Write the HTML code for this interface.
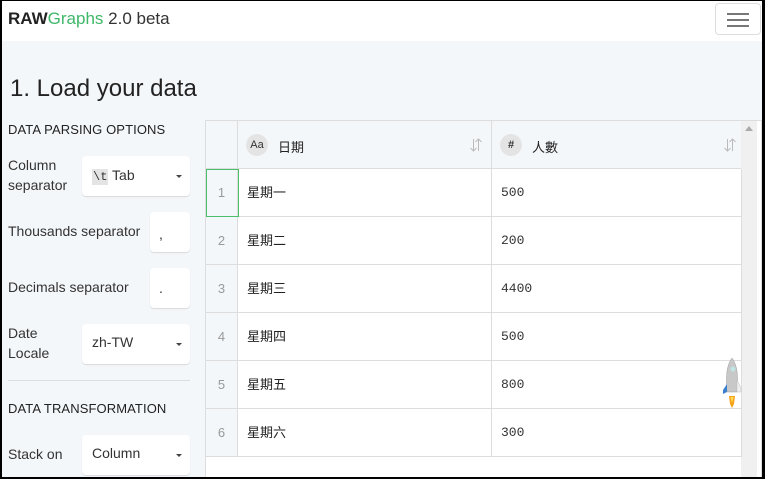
<!DOCTYPE html>
<html><head><meta charset="utf-8"><style>
*{box-sizing:border-box;margin:0;padding:0}
body{width:765px;height:479px;overflow:hidden;background:#000;font-family:"Liberation Sans","Noto Sans CJK TC",sans-serif;color:#222}
#f{position:absolute;left:2px;top:1px;width:760px;height:476px;background:#f4f7fa;overflow:hidden}
.a{position:absolute}
.hdr{left:0;top:0;width:760px;height:40px;background:#fff}
.sel{position:absolute;background:#fff;border-radius:4px;box-shadow:0 1px 1px rgba(0,0,0,.12);font-size:14px;color:#333}
.car{position:absolute;right:8px;top:50%;margin-top:-1px;border-left:3px solid transparent;border-right:3px solid transparent;border-top:3px solid #444}
.lbl{position:absolute;left:6px;font-size:14px;line-height:20px;color:#333}
.h6{position:absolute;left:6px;font-size:13px;letter-spacing:.1px;color:#222}
.cell{position:absolute;border-right:1px solid #ddd;border-bottom:1px solid #ddd;font-size:13px}
.num{color:#999;text-align:center;font-size:13px}
.mono{font-family:"Liberation Mono",monospace;font-size:13px;color:#333}
.pill{position:absolute;left:8px;top:13px;width:22px;height:22px;border-radius:11px;background:#e4e4e4;font-size:11px;text-align:center;line-height:22px;color:#333}
.srt{position:absolute;top:17px}
</style></head><body><div id="f">
<div class="a hdr"></div>
<div class="a" style="left:6px;top:8px;font-size:17px"><b style="color:#222">RAW</b><span style="color:#3fb768">Graphs</span> <span style="color:#333">2.0 beta</span></div>
<div class="a" style="left:713px;top:2px;width:46px;height:32px;border:1px solid #ddd;border-radius:4px;background:#fff">
<div class="a" style="left:11px;top:9px;width:22px;height:2px;background:#777"></div>
<div class="a" style="left:11px;top:15px;width:22px;height:2px;background:#777"></div>
<div class="a" style="left:11px;top:21px;width:22px;height:2px;background:#777"></div></div>
<div class="a" style="left:8px;top:74px;font-size:24px;color:#222">1. Load your data</div>
<div class="h6" style="top:121px">DATA PARSING OPTIONS</div>
<div class="lbl" style="top:154px">Column<br>separator</div>
<div class="sel" style="left:80px;top:155px;width:108px;height:40px"><span class="a" style="left:10px;top:11px"><span style="background:#e4e4e4;font-family:'Liberation Mono',monospace;font-size:12px;padding:1px">\t</span> Tab</span><div class="car"></div></div>
<div class="lbl" style="top:220px">Thousands separator</div>
<div class="sel" style="left:148px;top:211px;width:40px;height:40px"><span class="a" style="left:9px;top:14px">,</span></div>
<div class="lbl" style="top:276px">Decimals separator</div>
<div class="sel" style="left:148px;top:267px;width:40px;height:40px"><span class="a" style="left:9px;top:12px">.</span></div>
<div class="lbl" style="top:322px">Date<br>Locale</div>
<div class="sel" style="left:80px;top:323px;width:108px;height:40px"><span class="a" style="left:10px;top:10px">zh-TW</span><div class="car"></div></div>
<div class="a" style="left:6px;top:379px;width:182px;height:1px;background:#ddd"></div>
<div class="h6" style="top:400px">DATA TRANSFORMATION</div>
<div class="lbl" style="top:443px">Stack on</div>
<div class="sel" style="left:80px;top:434px;width:108px;height:40px"><span class="a" style="left:10px;top:10px">Column</span><div class="car"></div></div>

<div class="a" style="left:203px;top:119px;width:557px;height:360px;background:#fff;border:1px solid #ddd"></div>
<div class="a" style="left:204px;top:120px;width:535px;height:47px;background:#f4f7fa"></div>
<div class="cell" style="left:204px;top:120px;width:32px;height:48px"></div>
<div class="cell" style="left:236px;top:120px;width:254px;height:48px"><div class="pill">Aa</div><span class="a" style="left:40px;top:16px">日期</span>
<svg class="srt" style="right:8px" width="14" height="14" viewBox="0 0 14 14" fill="none" stroke="#bbb" stroke-width="1"><path d="M4.5 1V13M1.5 10L4.5 13L7.5 10M9.5 13V1M6.5 4L9.5 1L12.5 4"/></svg></div>
<div class="cell" style="left:490px;top:120px;width:250px;height:48px"><div class="pill"><b>#</b></div><span class="a" style="left:40px;top:16px">人數</span>
<svg class="srt" style="right:4px" width="14" height="14" viewBox="0 0 14 14" fill="none" stroke="#bbb" stroke-width="1"><path d="M4.5 1V13M1.5 10L4.5 13L7.5 10M9.5 13V1M6.5 4L9.5 1L12.5 4"/></svg></div>

<div class="a" style="left:739px;top:120px;width:16px;height:360px;background:#f0f0f0"></div>
<div class="a" style="left:743px;top:125px;border-left:4px solid transparent;border-right:4px solid transparent;border-bottom:5px solid #aaa"></div>

<div id="rows"></div>
<div class="a" style="left:204px;top:168px;width:33px;height:48px;border:1px solid #4bbf6b"></div>

<svg class="a" style="left:720px;top:357px" width="24" height="52" viewBox="0 0 24 52">
<path d="M10 0 C4 8 4 20 5 34 L15 34 C16 20 16 8 10 0Z" fill="#c8c8c8" stroke="#999" stroke-width=".5"/>
<path d="M15 22 L19 30 L19 34 L15 34Z" fill="#eee" stroke="#bbb" stroke-width=".5"/>
<path d="M5 26 L1 32 L1 36 L5 34Z" fill="#3a7fd0"/>
<circle cx="11" cy="11" r="2.5" fill="#bfe6e2"/>
<path d="M7 38 L13 38 L12 46 L10 50 L8 46Z" fill="#f7a21b"/>
<path d="M8.5 39 L11.5 39 L10 45Z" fill="#ffe05a"/>
</svg>
</div>
<script>
var d=[["星期一","500"],["星期二","200"],["星期三","4400"],["星期四","500"],["星期五","800"],["星期六","300"]],h="";
d.forEach(function(r,i){var t=168+i*48;
h+='<div class="cell num" style="left:204px;top:'+t+'px;width:32px;height:48px;line-height:47px;background:#f4f7fa">'+(i+1)+'</div>';
h+='<div class="cell" style="left:236px;top:'+t+'px;width:254px;height:48px;line-height:47px;padding-left:9px">'+r[0]+'</div>';
h+='<div class="cell mono" style="left:490px;top:'+t+'px;width:250px;height:48px;line-height:47px;padding-left:9px">'+r[1]+'</div>';});
document.getElementById('rows').outerHTML=h;
</script>
</body></html>
